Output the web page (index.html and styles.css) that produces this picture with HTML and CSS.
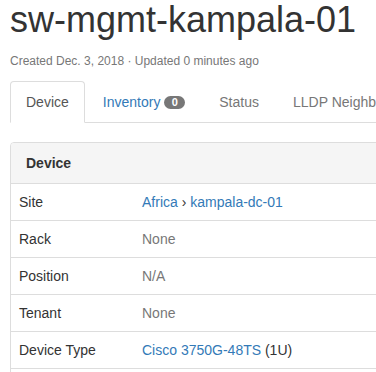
FILE: index.html
```html
<!DOCTYPE html>
<html>
<head>
<meta charset="utf-8">
<link rel="stylesheet" href="styles.css">
</head>
<body>
<div class="page">
  <h1 class="title">sw-mgmt-kampala-01</h1>
  <p class="meta"><small>Created Dec. 3, 2018 · Updated 0 minutes ago</small></p>
  <ul class="tabs">
    <li class="tab active"><a>Device</a></li>
    <li class="tab"><a class="link">Inventory <span class="badge">0</span></a></li>
    <li class="tab disabled"><a>Status</a></li>
    <li class="tab disabled"><a>LLDP Neighbors</a></li>
    <li class="tab disabled"><a>Configuration</a></li>
  </ul>
  <div class="panel">
    <div class="panel-heading"><strong>Device</strong></div>
    <table class="attrs">
      <tr><td class="label">Site</td><td><a class="link">Africa</a> <span class="sep">›</span> <a class="link">kampala-dc-01</a></td></tr>
      <tr><td class="label">Rack</td><td><span class="muted">None</span></td></tr>
      <tr><td class="label">Position</td><td><span class="muted">N/A</span></td></tr>
      <tr><td class="label">Tenant</td><td><span class="muted">None</span></td></tr>
      <tr><td class="label">Device Type</td><td><a class="link">Cisco 3750G-48TS</a> (1U)</td></tr>
      <tr><td class="label">Serial Number</td><td><span class="muted">N/A</span></td></tr>
    </table>
  </div>
</div>
</body>
</html>
```

FILE: styles.css
```css
html, body {
  margin: 0;
  padding: 0;
  overflow: hidden;
  background: #fff;
}
body {
  font-family: "Liberation Sans", Arial, sans-serif;
  font-size: 14px;
  line-height: 20px;
  color: #333;
}
.page {
  width: 1000px;
  padding-left: 10px;
}
.title {
  margin: 0 0 10px;
  font-size: 36px;
  font-weight: 400;
  line-height: 1.1;
  color: #333;
}
.meta {
  margin: 0 0 10px;
  color: #777;
}
.meta small {
  font-size: 12px;
}
.tabs {
  list-style: none;
  margin: 0 0 19px;
  padding: 0;
  display: flex;
  border-bottom: 1px solid #ddd;
}
.tab {
  margin-bottom: -1px;
}
.tab a {
  display: block;
  margin-right: 2px;
  padding: 10px 15px;
  line-height: 20px;
  border: 1px solid transparent;
  border-radius: 4px 4px 0 0;
  color: #337ab7;
  white-space: nowrap;
}
.tab.active a {
  color: #555;
  background: #fff;
  border-color: #ddd #ddd transparent;
}
.tab.disabled a {
  color: #777;
}
.badge {
  display: inline-block;
  min-width: 7px;
  padding: 1px 7px;
  font-size: 11px;
  font-weight: 700;
  line-height: 11px;
  color: #fff;
  text-align: center;
  vertical-align: 1px;
  background: #777;
  border-radius: 10px;
}
.panel {
  border: 1px solid #ddd;
  border-radius: 4px;
  background: #fff;
  overflow: hidden;
}
.panel-heading {
  padding: 10px 15px;
  background: #f5f5f5;
  border-bottom: 1px solid #ddd;
}
.attrs {
  width: 100%;
  border-collapse: collapse;
}
.attrs td {
  padding: 8px;
  line-height: 20px;
  border-top: 1px solid #ddd;
  vertical-align: top;
}
.attrs tr:first-child td {
  border-top: 0;
}
.attrs td.label {
  width: 107px;
}
.link {
  color: #337ab7;
  text-decoration: none;
}
.muted {
  color: #777;
}
.sep {
  color: #333;
}
```
